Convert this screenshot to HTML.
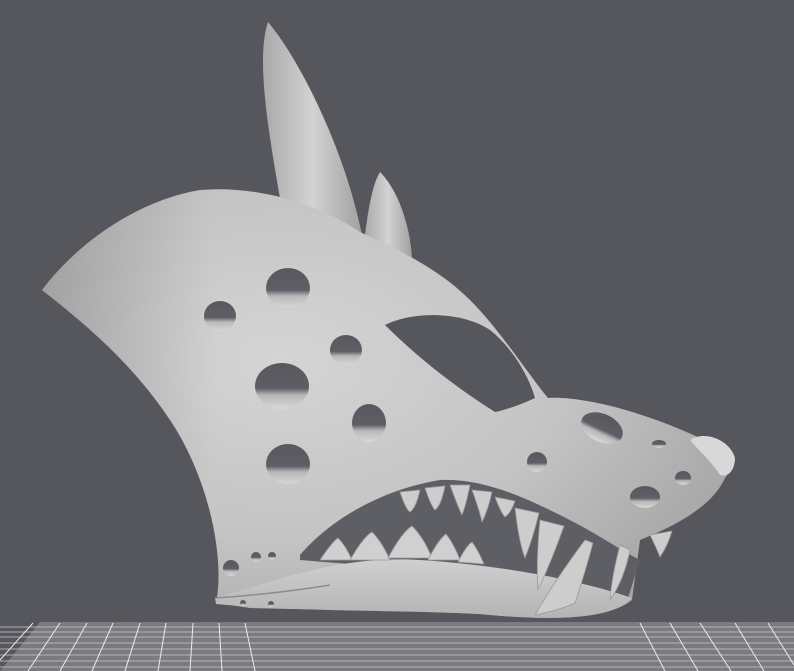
<!DOCTYPE html>
<html><head><meta charset="utf-8"><style>
html,body{margin:0;padding:0;background:#56565d;}
svg{display:block}
</style></head><body>
<svg width="794" height="671" viewBox="0 0 794 671" xmlns="http://www.w3.org/2000/svg">
<defs>
<radialGradient id="g" cx="0.35" cy="0.4" r="0.75">
<stop offset="0" stop-color="#d4d4d4"/><stop offset="0.55" stop-color="#c4c4c4"/><stop offset="1" stop-color="#a4a4a4"/>
</radialGradient>
<linearGradient id="shade" x1="0" y1="0" x2="1" y2="0">
<stop offset="0" stop-color="#000" stop-opacity="0.18"/><stop offset="0.25" stop-color="#000" stop-opacity="0"/><stop offset="1" stop-color="#000" stop-opacity="0"/>
</linearGradient>
<linearGradient id="h" x1="0" x2="1"><stop offset="0" stop-color="#a9a9a9"/><stop offset="0.5" stop-color="#d2d2d2"/><stop offset="1" stop-color="#a0a0a0"/></linearGradient>
<linearGradient id="hole" x1="0" y1="0" x2="0" y2="1"><stop offset="0" stop-color="#58585f"/><stop offset="0.55" stop-color="#5e5e65"/><stop offset="0.7" stop-color="#b8b8b8"/><stop offset="1" stop-color="#d8d8d8"/></linearGradient>
<linearGradient id="jaw" x1="0" y1="0" x2="0" y2="1"><stop offset="0" stop-color="#d0d0d0"/><stop offset="1" stop-color="#b4b4b4"/></linearGradient>
</defs>
<rect width="794" height="671" fill="#56565d"/>
<!-- floor grid -->
<polygon points="40,622 794,622 794,671 0,671" fill="#7a7a80"/>
<g stroke="#c4c4c8" stroke-width="1" opacity="0.8">
<line x1="0" y1="627" x2="794" y2="627"/><line x1="0" y1="632" x2="794" y2="632"/><line x1="0" y1="637" x2="794" y2="637"/><line x1="0" y1="643" x2="794" y2="643"/><line x1="0" y1="649" x2="794" y2="649"/><line x1="0" y1="655" x2="794" y2="655"/><line x1="0" y1="661" x2="794" y2="661"/><line x1="0" y1="667" x2="794" y2="667"/>
</g>
<g stroke="#ececee" stroke-width="1">
<line x1="33" y1="623" x2="0" y2="660"/><line x1="60" y1="623" x2="28" y2="671"/><line x1="87" y1="623" x2="60" y2="671"/><line x1="113" y1="623" x2="92" y2="671"/><line x1="140" y1="623" x2="125" y2="671"/><line x1="166" y1="623" x2="158" y2="671"/><line x1="193" y1="623" x2="190" y2="671"/><line x1="219" y1="623" x2="222" y2="671"/><line x1="245" y1="623" x2="255" y2="671"/><line x1="640" y1="623" x2="665" y2="671"/><line x1="670" y1="623" x2="698" y2="671"/><line x1="700" y1="623" x2="731" y2="671"/><line x1="735" y1="623" x2="764" y2="671"/><line x1="768" y1="623" x2="794" y2="665"/>
</g>
<!-- horns -->
<path d="M282,210 C270,140 255,60 268,22 C300,60 345,150 362,235 Z" fill="url(#h)"/>
<path d="M364,243 C368,210 372,185 380,172 C398,190 410,225 412,258 Z" fill="url(#h)"/>
<!-- head -->
<path id="head" d="M42,290 C80,240 140,200 200,190 C260,185 320,205 360,232 C400,250 440,270 470,300 C500,330 525,370 548,398 C580,396 640,410 700,438 C728,445 738,462 725,478 C715,500 690,520 640,540 L632,600 C610,618 560,622 480,614 C400,610 320,610 250,608 L216,603 C225,560 210,480 170,420 C130,360 80,320 42,290 Z" fill="url(#g)"/>
<path d="M42,290 C80,240 140,200 200,190 C260,185 320,205 360,232 C400,250 440,270 470,300 C500,330 525,370 548,398 C580,396 640,410 700,438 C728,445 738,462 725,478 C715,500 690,520 640,540 L632,600 C610,618 560,622 480,614 C400,610 320,610 250,608 L216,603 C225,560 210,480 170,420 C130,360 80,320 42,290 Z" fill="url(#shade)"/>
<!-- eye opening -->
<path d="M385,325 C410,312 460,310 490,330 C515,350 530,380 535,398 C520,405 505,410 495,412 C460,390 420,360 385,325 Z" fill="#56565d"/>
<!-- mouth interior -->
<path d="M300,555 C330,520 380,490 440,480 C480,478 520,495 560,515 C600,535 620,550 640,560 L628,598 C600,585 560,580 520,575 C430,570 360,565 300,560 Z" fill="#5e5e65"/>
<!-- lower jaw -->
<path d="M215,598 C280,580 340,555 420,560 C500,565 580,580 632,598 C615,618 560,622 480,614 C400,610 300,612 216,604 Z" fill="url(#jaw)"/>
<path d="M215,598 C260,595 300,590 330,585" stroke="#8c8c8c" stroke-width="1.5" fill="none"/>
<!-- teeth upper -->
<g fill="#cdcdcd" stroke="#9a9a9a" stroke-width="0.8">
<path d="M400,492 q6,18 10,20 q6,-4 10,-22z"/><path d="M425,488 q6,18 10,22 q6,-4 10,-24z"/><path d="M450,485 q8,22 12,30 q4,-10 8,-30z"/><path d="M472,490 q8,22 10,32 q6,-12 10,-30z"/><path d="M495,497 q6,16 10,20 q6,-4 10,-16z"/><path d="M515,508 q4,35 10,50 q8,-20 14,-45z"/><path d="M540,520 q-4,40 -2,70 q14,-30 26,-64z"/><path d="M585,540 q-30,40 -50,75 q25,-5 40,-12 q10,-30 18,-60z"/><path d="M620,545 q-8,30 -10,55 q14,-20 20,-50z"/><path d="M650,535 q6,12 10,22 q8,-12 12,-26z"/>
</g>
<!-- teeth lower -->
<g fill="#d0d0d0" stroke="#9a9a9a" stroke-width="0.8">
<path d="M320,560 q12,-18 18,-22 q8,8 14,22z"/><path d="M350,560 q14,-24 22,-28 q10,10 18,28z"/><path d="M388,558 q14,-26 24,-32 q12,12 20,32z"/><path d="M428,560 q10,-20 18,-26 q8,10 14,26z"/><path d="M458,562 q8,-16 14,-20 q6,8 12,22z"/>
</g>
<!-- holes -->
<g fill="url(#hole)">
<ellipse cx="288" cy="288" rx="22" ry="20"/>
<ellipse cx="220" cy="316" rx="16" ry="15"/>
<ellipse cx="346" cy="350" rx="16" ry="15"/>
<ellipse cx="282" cy="386" rx="27" ry="23"/>
<ellipse cx="369" cy="423" rx="17" ry="19"/>
<ellipse cx="288" cy="464" rx="22" ry="20"/>
<ellipse cx="602" cy="428" rx="22" ry="14" transform="rotate(25 602 428)"/>
<ellipse cx="537" cy="462" rx="10" ry="10"/>
<ellipse cx="645" cy="497" rx="15" ry="11"/>
<ellipse cx="683" cy="478" rx="8" ry="7"/>
<ellipse cx="659" cy="444" rx="7" ry="4"/>
<ellipse cx="231" cy="568" rx="8" ry="8"/>
<ellipse cx="256" cy="557" rx="5" ry="5"/>
<ellipse cx="272" cy="556" rx="4" ry="4"/>
<ellipse cx="243" cy="603" rx="3" ry="3"/>
<ellipse cx="271" cy="604" rx="3" ry="3"/>
</g>
<!-- nose -->
<path d="M690,440 C705,430 730,440 735,458 C735,470 728,478 720,475 C712,462 700,452 690,440Z" fill="#d8d8d8"/>
</svg>
</body></html>
